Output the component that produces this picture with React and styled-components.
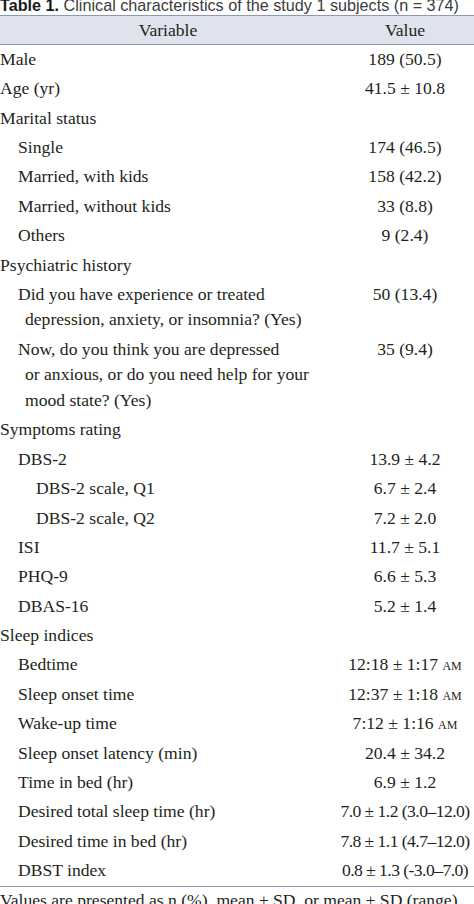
import React from "react";
import styled, { createGlobalStyle } from "styled-components";

const GlobalStyle = createGlobalStyle`
  html, body {
    margin: 0;
    padding: 0;
    background: #ffffff;
  }
  body {
    width: 474px;
    height: 904px;
    overflow: hidden;
  }
`;

const Page = styled.div`
  width: 474px;
  color: #231f20;
  font-family: "Liberation Serif", "Times New Roman", serif;
`;

const Caption = styled.div`
  height: 15px;
  line-height: 10px;
  font-family: "Liberation Sans", Arial, sans-serif;
  font-size: 16.2px;
  color: #3c3c3c;
  white-space: nowrap;
`;

const CaptionLabel = styled.b`
  color: #1a1a1a;
  font-weight: 700;
`;

const Table = styled.table`
  width: 474px;
  border-collapse: collapse;
  table-layout: fixed;
  font-size: 17.6px;
  border-bottom: 1.5px solid #8c9bb5;
`;

const HeadRow = styled.tr`
  background: #dfe3ed;
  border-top: 1px solid #8c9bb5;
  border-bottom: 1.5px solid #8c9bb5;
`;

const HeadCell = styled.th`
  font-weight: 400;
  text-align: center;
  line-height: 28px;
  padding: 0;
  width: ${(p) => p.$width}px;
`;

const Cell = styled.td`
  padding: 1.9px 4px 1.9px ${(p) => p.$level * 18}px;
  line-height: 25.6px;
  vertical-align: top;
  text-align: left;
  white-space: nowrap;
`;

const WrapLine = styled.div`
  padding-left: ${(p) => (p.$first ? 0 : 7)}px;
`;

const ValueCell = styled.td`
  padding: 1.9px 0;
  line-height: 25.6px;
  vertical-align: top;
  text-align: center;
  white-space: nowrap;
  letter-spacing: ${(p) => (p.$tight ? "-0.55px" : "normal")};
`;

const SmallCaps = styled.span`
  font-variant: small-caps;
`;

const Footnote = styled.div`
  margin-top: 3px;
  font-size: 17.6px;
  line-height: 20px;
  white-space: nowrap;
`;

const am = <SmallCaps>am</SmallCaps>;

const rows = [
  { label: "Male", value: "189 (50.5)" },
  { label: "Age (yr)", value: "41.5 ± 10.8" },
  { label: "Marital status" },
  { label: "Single", level: 1, value: "174 (46.5)" },
  { label: "Married, with kids", level: 1, value: "158 (42.2)" },
  { label: "Married, without kids", level: 1, value: "33 (8.8)" },
  { label: "Others", level: 1, value: "9 (2.4)" },
  { label: "Psychiatric history" },
  {
    label: [
      "Did you have experience or treated",
      "depression, anxiety, or insomnia? (Yes)",
    ],
    level: 1,
    value: "50 (13.4)",
  },
  {
    label: [
      "Now, do you think you are depressed",
      "or anxious, or do you need help for your",
      "mood state? (Yes)",
    ],
    level: 1,
    value: "35 (9.4)",
  },
  { label: "Symptoms rating" },
  { label: "DBS-2", level: 1, value: "13.9 ± 4.2" },
  { label: "DBS-2 scale, Q1", level: 2, value: "6.7 ± 2.4" },
  { label: "DBS-2 scale, Q2", level: 2, value: "7.2 ± 2.0" },
  { label: "ISI", level: 1, value: "11.7 ± 5.1" },
  { label: "PHQ-9", level: 1, value: "6.6 ± 5.3" },
  { label: "DBAS-16", level: 1, value: "5.2 ± 1.4" },
  { label: "Sleep indices" },
  { label: "Bedtime", level: 1, value: <>12:18 ± 1:17 {am}</> },
  { label: "Sleep onset time", level: 1, value: <>12:37 ± 1:18 {am}</> },
  { label: "Wake-up time", level: 1, value: <>7:12 ± 1:16 {am}</> },
  { label: "Sleep onset latency (min)", level: 1, value: "20.4 ± 34.2" },
  { label: "Time in bed (hr)", level: 1, value: "6.9 ± 1.2" },
  {
    label: "Desired total sleep time (hr)",
    level: 1,
    value: "7.0 ± 1.2 (3.0–12.0)",
    tight: true,
  },
  {
    label: "Desired time in bed (hr)",
    level: 1,
    value: "7.8 ± 1.1 (4.7–12.0)",
    tight: true,
  },
  {
    label: "DBST index",
    level: 1,
    value: "0.8 ± 1.3 (-3.0–7.0)",
    tight: true,
  },
];

const App = () => {
  return (
    <Page>
      <GlobalStyle />
      <Caption>
        <CaptionLabel>Table 1.</CaptionLabel> Clinical characteristics of the
        study 1 subjects (n = 374)
      </Caption>
      <Table>
        <thead>
          <HeadRow>
            <HeadCell $width={336}>Variable</HeadCell>
            <HeadCell $width={138}>Value</HeadCell>
          </HeadRow>
        </thead>
        <tbody>
          {rows.map((row, i) => (
            <tr key={i}>
              <Cell $level={row.level || 0}>
                {Array.isArray(row.label)
                  ? row.label.map((line, j) => (
                      <WrapLine key={j} $first={j === 0}>
                        {line}
                      </WrapLine>
                    ))
                  : row.label}
              </Cell>
              <ValueCell $tight={row.tight}>{row.value}</ValueCell>
            </tr>
          ))}
        </tbody>
      </Table>
      <Footnote>
        Values are presented as n (%), mean ± SD, or mean ± SD (range).
      </Footnote>
    </Page>
  );
};

export default App;
